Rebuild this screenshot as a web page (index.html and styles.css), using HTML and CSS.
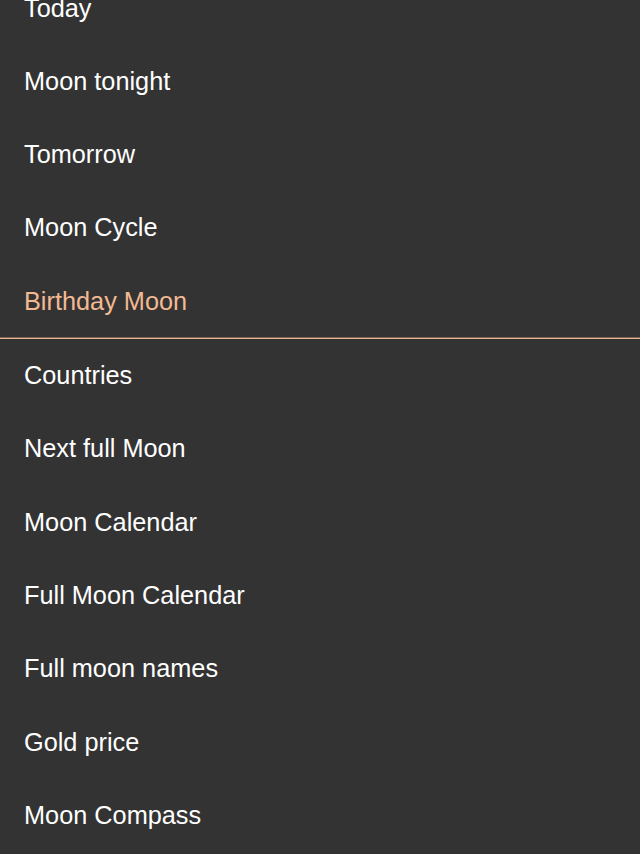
FILE: index.html
```html
<!DOCTYPE html>
<html>
<head>
<meta charset="utf-8">
<link rel="stylesheet" href="styles.css">
</head>
<body>
<nav class="menu">
  <ul class="list">
    <li class="item">Today</li>
    <li class="item">Moon tonight</li>
    <li class="item">Tomorrow</li>
    <li class="item">Moon Cycle</li>
    <li class="item active">Birthday Moon</li>
  </ul>
  <ul class="list">
    <li class="item">Countries</li>
    <li class="item">Next full Moon</li>
    <li class="item">Moon Calendar</li>
    <li class="item">Full Moon Calendar</li>
    <li class="item">Full moon names</li>
    <li class="item">Gold price</li>
    <li class="item">Moon Compass</li>
  </ul>
</nav>
</body>
</html>
```
FILE: styles.css
```css
html, body {
  margin: 0;
  padding: 0;
  background: #333333;
  height: 100%;
  overflow: hidden;
}
.menu {
  margin-top: -28.5px;
  font-family: "Liberation Sans", Arial, Helvetica, sans-serif;
  font-size: 25.3px;
  color: #ffffff;
}
.list {
  list-style: none;
  margin: 0;
  padding: 0;
}
.list + .list {
  border-top: 1px solid #e6b28e;
  box-shadow: 0 -1px 0 rgba(217, 168, 134, 0.45);
}
.item {
  height: 73.33px;
  line-height: 73.33px;
  padding-left: 24px;
  white-space: nowrap;
}
.active {
  color: #f2b992;
}
```
